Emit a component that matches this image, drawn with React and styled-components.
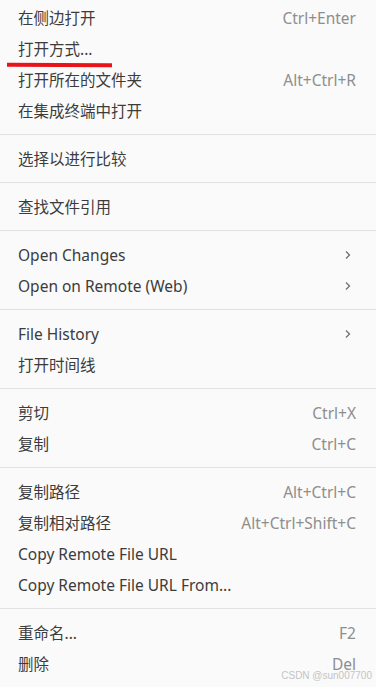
import React from 'react'
import styled, { createGlobalStyle } from 'styled-components'

const GlobalStyle = createGlobalStyle`
  html, body {
    margin: 0;
    padding: 0;
    background: #fafafa;
  }
  body {
    font-family: "Noto Sans", "Noto Sans CJK SC", sans-serif;
  }
`

const Menu = styled.div`
  position: relative;
  width: 376px;
  height: 687px;
  box-sizing: border-box;
  padding-top: 2px;
  background: #fafafa;
  overflow: hidden;
`

const Row = styled.div`
  position: relative;
  display: flex;
  align-items: center;
  justify-content: space-between;
  height: 31px;
  padding: 0 20px 0 18px;
  font-size: 15.5px;
  color: #3c3c3c;
`

const Label = styled.span`
  white-space: nowrap;
`

const Shortcut = styled.span`
  color: #8e8e8e;
  white-space: nowrap;
`

const Chevron = styled.svg`
  width: 6px;
  height: 10px;
  margin-right: 5px;
`

const Separator = styled.div`
  height: 1px;
  margin: 8px 0;
  background: #e2e2e2;
`

const Underline = styled.span`
  position: absolute;
  left: 7px;
  top: 30px;
  width: 105px;
  height: 4px;
  background: #e8141a;
  transform: rotate(0.2deg);
`

const Watermark = styled.span`
  position: absolute;
  right: 4px;
  bottom: 6px;
  font-family: "Liberation Sans", sans-serif;
  font-size: 10px;
  color: #c4c4c4;
`

const groups = [
  [
    { label: '在侧边打开', shortcut: 'Ctrl+Enter' },
    { label: '打开方式...', marked: true },
    { label: '打开所在的文件夹', shortcut: 'Alt+Ctrl+R' },
    { label: '在集成终端中打开' },
  ],
  [{ label: '选择以进行比较' }],
  [{ label: '查找文件引用' }],
  [
    { label: 'Open Changes', sub: true },
    { label: 'Open on Remote (Web)', sub: true },
  ],
  [
    { label: 'File History', sub: true },
    { label: '打开时间线' },
  ],
  [
    { label: '剪切', shortcut: 'Ctrl+X' },
    { label: '复制', shortcut: 'Ctrl+C' },
  ],
  [
    { label: '复制路径', shortcut: 'Alt+Ctrl+C' },
    { label: '复制相对路径', shortcut: 'Alt+Ctrl+Shift+C' },
    { label: 'Copy Remote File URL' },
    { label: 'Copy Remote File URL From...' },
  ],
  [
    { label: '重命名...', shortcut: 'F2' },
    { label: '删除', shortcut: 'Del' },
  ],
]

const Item = ({ label, shortcut, sub, marked }) => (
  <Row>
    <Label>{label}</Label>
    {shortcut && <Shortcut>{shortcut}</Shortcut>}
    {sub && (
      <Chevron viewBox="0 0 6 10">
        <path d="M1 1.5 L4.5 5 L1 8.5" fill="none" stroke="#707070" strokeWidth="1.3" />
      </Chevron>
    )}
    {marked && <Underline />}
  </Row>
)

export default function App() {
  return (
    <Menu>
      <GlobalStyle />
      {groups.map((items, i) => (
        <React.Fragment key={i}>
          {i > 0 && <Separator />}
          {items.map(item => (
            <Item key={item.label} {...item} />
          ))}
        </React.Fragment>
      ))}
      <Watermark>CSDN @sun007700</Watermark>
    </Menu>
  )
}
